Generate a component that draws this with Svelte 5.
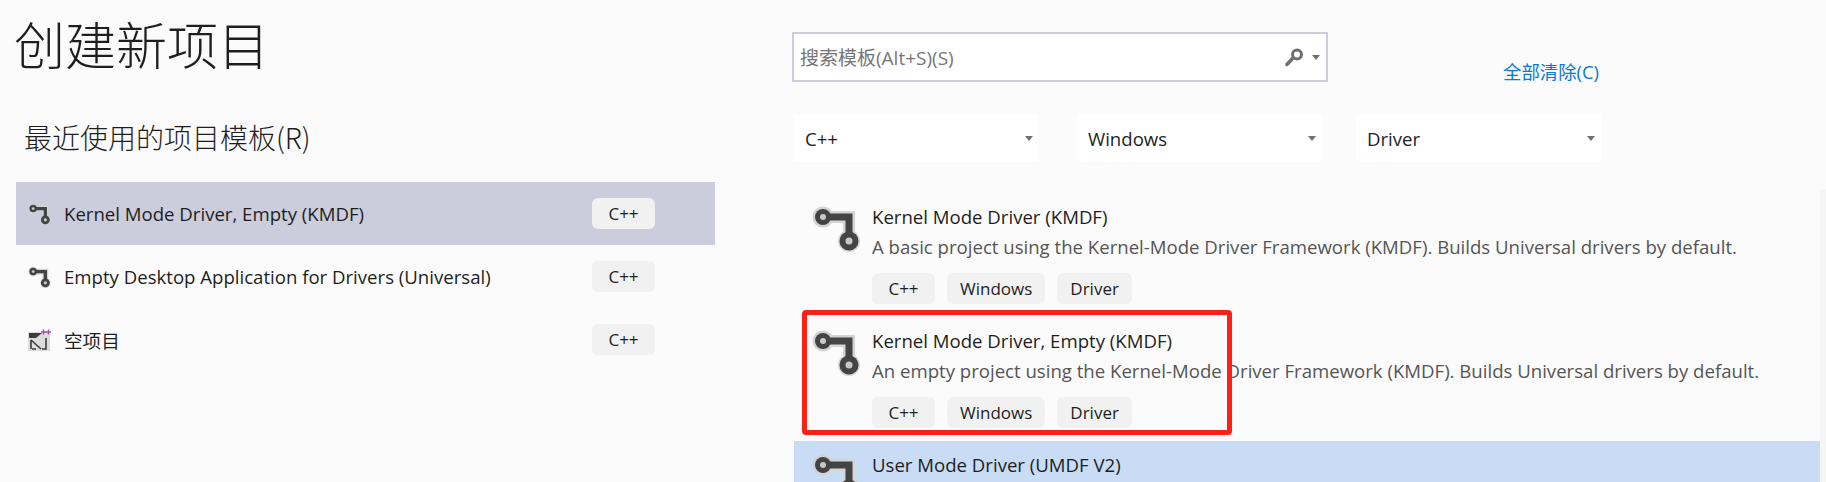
<script lang="ts">
	const recent = [
		{ name: 'Kernel Mode Driver, Empty (KMDF)', icon: 'driver', selected: true },
		{ name: 'Empty Desktop Application for Drivers (Universal)', icon: 'driver', selected: false },
		{ name: '空项目', icon: 'empty', selected: false }
	];
	const filters = ['C++', 'Windows', 'Driver'];
	const templates = [
		{
			name: 'Kernel Mode Driver (KMDF)',
			desc: 'A basic project using the Kernel-Mode Driver Framework (KMDF). Builds Universal drivers by default.',
			selected: false
		},
		{
			name: 'Kernel Mode Driver, Empty (KMDF)',
			desc: 'An empty project using the Kernel-Mode Driver Framework (KMDF). Builds Universal drivers by default.',
			selected: false
		},
		{ name: 'User Mode Driver (UMDF V2)', desc: '', selected: true }
	];
</script>

{#snippet driverIcon(cls: string)}
	<svg class={cls} viewBox="0 0 47 47" aria-hidden="true">
		<g fill="none" stroke-linejoin="miter">
			<path d="M10 12H36V37" stroke="#d4d4d4" stroke-width="12" />
			<circle cx="10" cy="12" r="10.500" fill="#d4d4d4" />
			<circle cx="36" cy="36" r="11" fill="#d4d4d4" />
			<path d="M10 12H36V37" stroke="#444" stroke-width="7" />
			<circle cx="10" cy="12" r="8" fill="#444" />
			<circle cx="36" cy="36" r="9.500" fill="#444" />
			<circle cx="10" cy="12" r="3" fill="#c8c8c8" />
			<circle cx="36" cy="36" r="3.500" fill="#c8c8c8" />
		</g>
	</svg>
{/snippet}

{#snippet emptyIcon()}
	<svg class="icon-small" viewBox="0 0 23 22" aria-hidden="true">
		<rect x="0" y="3" width="22" height="19" fill="#dcdcdc" />
		<path d="M1 4H14L8 9H1Z" fill="#3c3c3c" />
		<path d="M3 11V20M3 11L13 20M18 9V20H14M4 20H8" fill="none" stroke="#3c3c3c" stroke-width="1.6" />
		<path d="M13 3H18M15.500 0.500V5.500M18 3H23M20.500 0.500V5.500" fill="none" stroke="#a34fb0" stroke-width="1.500" />
	</svg>
{/snippet}

{#snippet caret()}
	<svg class="caret" viewBox="0 0 8 5" aria-hidden="true"><path d="M0 0H8L4 5Z" fill="#707070" /></svg>
{/snippet}

<div class="page">
	<section class="left">
		<h1>创建新项目</h1>
		<h2>最近使用的项目模板(R)</h2>
		<ul class="recent">
			{#each recent as item}
				<li class:selected={item.selected}>
					{#if item.icon === 'driver'}
						{@render driverIcon('icon-small')}
					{:else}
						{@render emptyIcon()}
					{/if}
					<span class="recent-name">{item.name}</span>
					<span class="tag">C++</span>
				</li>
			{/each}
		</ul>
	</section>

	<section class="right">
		<div class="search-row">
			<div class="search">
				<span class="placeholder">搜索模板(Alt+S)(S)</span>
				<svg class="magnifier" viewBox="0 0 19 19" aria-hidden="true">
					<circle cx="12" cy="6.500" r="4.500" fill="none" stroke="#707070" stroke-width="3" />
					<path d="M8 10L2 16.500" stroke="#707070" stroke-width="3.500" stroke-linecap="round" />
				</svg>
				{@render caret()}
			</div>
			<span class="clear">全部清除(C)</span>
		</div>

		<div class="filters">
			{#each filters as filter}
				<div class="filter">
					<span>{filter}</span>
					{@render caret()}
				</div>
			{/each}
		</div>

		<ul class="templates">
			{#each templates as template}
				<li class:selected={template.selected}>
					{@render driverIcon('icon-large')}
					<div class="info">
						<div class="name">{template.name}</div>
						{#if template.desc}
							<div class="desc">{template.desc}</div>
							<div class="tags">
								{#each filters as filter}
									<span class="tag">{filter}</span>
								{/each}
							</div>
						{/if}
					</div>
				</li>
			{/each}
		</ul>

		<!-- red annotation drawn over the screenshot -->
		<div class="annotation"></div>
	</section>

	<div class="scrollbar"></div>
</div>

<style>
	:global(body) {
		background: #fbfbfb;
	}

	.page {
		display: flex;
		height: 482px;
		overflow: hidden;
		background: #fbfbfb;
		color: #1e1e1e;
		font-family: 'Open Sans', 'Noto Sans CJK SC', sans-serif;
		font-size: 18.6px;
	}

	ul {
		list-style: none;
		margin: 0;
		padding: 0;
	}

	.left {
		width: 699px;
		margin-left: 16px;
		flex: none;
	}

	h1 {
		margin: 0 0 0 -2px;
		padding-top: 13px;
		height: 62px;
		font-size: 51px;
		line-height: 60px;
		font-weight: 300;
		font-family: 'Noto Sans CJK SC', sans-serif;
	}

	h2 {
		margin: 0;
		padding: 44px 0 0 8px;
		height: 63px;
		font-size: 28px;
		line-height: 36px;
		font-weight: 300;
		font-family: 'Noto Sans CJK SC', sans-serif;
	}

	.recent li {
		display: flex;
		align-items: center;
		height: 63px;
		padding: 0 60px 0 12px;
	}

	.recent li.selected {
		background: #cbcddc;
	}

	.recent-name {
		flex: 1;
		margin-left: 13px;
	}

	.icon-small {
		width: 23px;
		height: 22px;
		flex: none;
		filter: blur(0.3px);
	}

	.icon-large {
		width: 47px;
		height: 47px;
		flex: none;
		overflow: visible;
		filter: blur(0.5px);
	}

	.tag {
		display: inline-flex;
		align-items: center;
		justify-content: center;
		box-sizing: border-box;
		height: 31px;
		min-width: 63px;
		padding: 0 13px;
		border-radius: 6px;
		background: #f1f1f1;
		font-size: 17px;
		color: #1e1e1e;
	}

	.right {
		position: relative;
		width: 1026px;
		margin-left: 79px;
		flex: none;
	}

	.search-row {
		display: flex;
		height: 115px;
	}

	.search {
		display: flex;
		align-items: center;
		box-sizing: border-box;
		width: 536px;
		height: 50px;
		margin: 32px 0 0 -2px;
		padding: 0 6px;
		border: 2px solid #cbcddc;
		background: #fff;
	}

	.placeholder {
		flex: 1;
		color: #767676;
		font-size: 19px;
	}

	.magnifier {
		width: 19px;
		height: 19px;
		margin-right: 8px;
	}

	.caret {
		width: 8px;
		height: 5px;
		flex: none;
	}

	.clear {
		margin: 57px 0 0 175px;
		height: 30px;
		line-height: 30px;
		color: #0a78d4;
		font-size: 18.4px;
	}

	.filters {
		display: flex;
		gap: 34px;
		height: 46px;
		margin-bottom: 32px;
	}

	.filter {
		display: flex;
		align-items: center;
		justify-content: space-between;
		box-sizing: border-box;
		width: 245px;
		padding: 0 6px 0 11px;
		background: #fff;
	}

	.filter:nth-child(2) {
		margin-left: 4px;
	}

	.templates li {
		display: flex;
		gap: 12px;
		box-sizing: border-box;
		height: 124px;
		padding: 12px 0 0 19px;
	}

	.templates li.selected {
		background: #c8dcf5;
	}

	.name {
		height: 24px;
		line-height: 24px;
	}

	.desc {
		height: 24px;
		margin-top: 6px;
		line-height: 24px;
		color: #555;
	}

	.tags {
		display: flex;
		gap: 12px;
		margin-top: 14px;
	}

	.annotation {
		position: absolute;
		left: 8px;
		top: 310px;
		box-sizing: border-box;
		width: 430px;
		height: 125px;
		border: 5px solid #ff2015;
		border-radius: 4px;
	}

	.scrollbar {
		width: 6px;
		margin-top: 189px;
		background: #f5f5f5;
		flex: none;
	}
</style>
